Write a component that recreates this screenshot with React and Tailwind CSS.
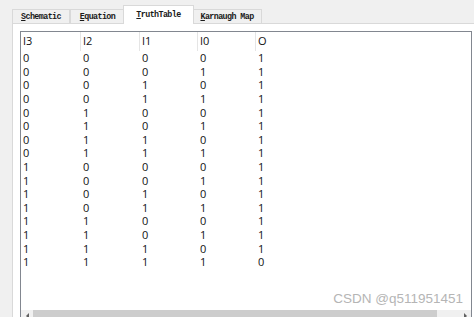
const COLS = ['I3', 'I2', 'I1', 'I0', 'O']
const WIDTHS = ['w-[60px]', 'w-[59px]', 'w-[58px]', 'w-[58px]', 'flex-1']

const rows = Array.from({ length: 16 }, (_, n) => {
  const bits = [(n >> 3) & 1, (n >> 2) & 1, (n >> 1) & 1, n & 1]
  return [...bits, n === 15 ? 0 : 1]
})

function Tab({ label, under, active, w }) {
  return (
    <div
      className={
        active
          ? `relative z-10 -mx-[2px] h-[19px] ${w} bg-white border border-b-0 border-[#d9d9d9] flex items-center justify-center`
          : `h-[15px] ${w} bg-[#f0f0f0] border border-b-0 border-[#d9d9d9] flex items-center justify-center`
      }
    >
      <span className="font-['Liberation_Mono',monospace] text-[8.4px] font-bold text-[#1a1a1a] tracking-[-0.6px]">
        <span className="underline">{under}</span>
        {label}
      </span>
    </div>
  )
}

export default function App() {
  return (
    <div className="w-[474px] h-[317px] bg-[#f0f0f0] overflow-hidden flex flex-col font-['Open_Sans',sans-serif]">
      {/* tabs */}
      <div className="h-[24px] pl-[12px] flex items-end">
        <Tab under="S" label="chematic" w="w-[58px]" />
        <Tab under="E" label="quation" w="w-[55px]" />
        <Tab under="T" label="ruthTable" w="w-[71px]" active />
        <Tab under="K" label="arnaugh Map" w="w-[70px]" />
      </div>

      {/* page */}
      <div className="flex-1 ml-[12px] -mt-[1px] bg-white border-t border-l border-[#d9d9d9] pl-[7px] pt-[7px] flex flex-col min-h-0">
        <div className="flex-1 mr-[2px] border-t border-l border-r border-[#828790] flex flex-col relative min-h-0">
          {/* header */}
          <div className="h-[19px] flex text-[11px] text-[#111]">
            {COLS.map((c, i) => (
              <div
                key={c}
                className={`${WIDTHS[i]} pl-[2px] flex items-center ${i < 4 ? 'border-r border-[#e5e5e5]' : ''}`}
              >
                {c}
              </div>
            ))}
          </div>
          {/* rows */}
          {rows.map((r, ri) => (
            <div key={ri} className="h-[13.6px] flex text-[11px] leading-none text-[#111]">
              {r.map((v, i) => (
                <div key={i} className={`${WIDTHS[i]} ${i === 4 ? 'pl-[2px]' : 'pl-[2px] pr-[1px]'} flex items-center`}>
                  {v}
                </div>
              ))}
            </div>
          ))}
          <div className="flex-1" />
          <div className="self-end mr-[8px] mb-[5px] font-['Liberation_Sans',sans-serif] text-[13.5px] text-[#b5b5b5] leading-none">
            CSDN @q511951451
          </div>
          {/* horizontal scrollbar */}
          <div className="h-[7px] bg-[#f0f0f0] flex items-start">
            <div className="w-[12px] flex justify-center pt-[3px]">
              <div className="w-0 h-0 border-y-[3px] border-y-transparent border-r-[3px] border-r-[#606060]" />
            </div>
            <div className="w-[404px] h-[7px] bg-[#cdcdcd]" />
            <div className="flex-1" />
            <div className="w-[12px] flex justify-center pt-[3px]">
              <div className="w-0 h-0 border-y-[3px] border-y-transparent border-l-[3px] border-l-[#606060]" />
            </div>
          </div>
        </div>
      </div>
    </div>
  )
}
